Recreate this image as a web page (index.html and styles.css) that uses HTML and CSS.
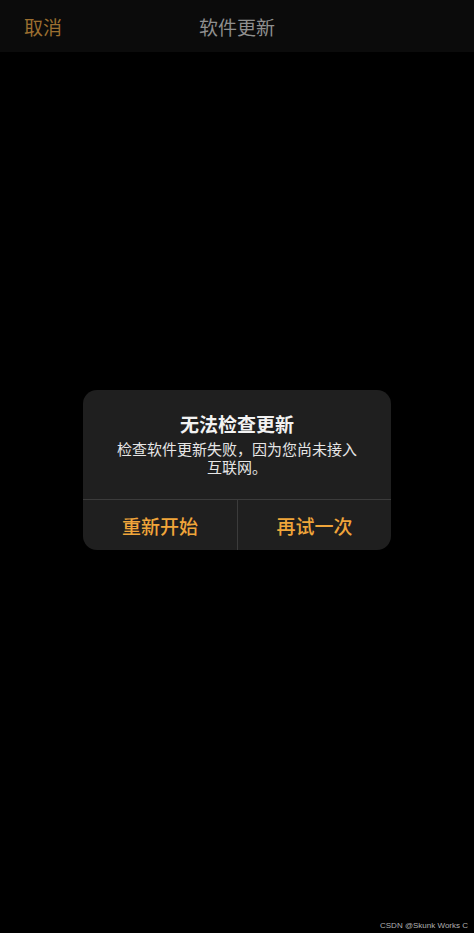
FILE: index.html
```html
<!DOCTYPE html>
<html lang="zh">
<head>
<meta charset="utf-8">
<link rel="stylesheet" href="styles.css">
</head>
<body>
<div class="screen">
  <header class="topbar">
    <span class="cancel">取消</span>
    <span class="title">软件更新</span>
  </header>
  <main class="stage">
    <div class="alert">
      <div class="alert-body">
        <div class="alert-title">无法检查更新</div>
        <div class="alert-msg">检查软件更新失败，因为您尚未接入<br>互联网。</div>
      </div>
      <div class="alert-actions">
        <div class="btn">重新开始</div>
        <div class="btn">再试一次</div>
      </div>
    </div>
  </main>
  <footer class="watermark">CSDN @Skunk Works C</footer>
</div>
</body>
</html>
```
FILE: styles.css
```css
html, body {
  margin: 0;
  padding: 0;
  background: #000;
}
body {
  font-family: "Noto Sans CJK SC", "Noto Sans", sans-serif;
}
.screen {
  width: 474px;
  height: 933px;
  display: flex;
  flex-direction: column;
  position: relative;
  overflow: hidden;
}
.topbar {
  height: 52px;
  background: #0b0b0b;
  position: relative;
  display: flex;
  align-items: center;
  justify-content: center;
  flex-shrink: 0;
}
.cancel {
  position: absolute;
  left: 24px;
  top: 14px;
  font-size: 19px;
  line-height: 26px;
  color: #9c6f30;
}
.title {
  font-size: 19px;
  line-height: 26px;
  color: #8f8f8f;
  margin-top: 1px;
}
.stage {
  flex: 1;
  display: flex;
  flex-direction: column;
  align-items: center;
  padding-top: 338px;
}
.alert {
  width: 308px;
  background: #1f1f1f;
  border-radius: 14px;
  overflow: hidden;
}
.alert-body {
  padding: 23px 16px 23px;
  text-align: center;
}
.alert-title {
  font-size: 19px;
  font-weight: bold;
  line-height: 22px;
  color: #f2f2f2;
}
.alert-msg {
  margin-top: 5px;
  font-size: 15px;
  line-height: 18px;
  color: #e6e6e6;
}
.alert-actions {
  display: grid;
  grid-template-columns: 1fr 1fr;
  border-top: 1px solid #3b3b3b;
  height: 50px;
}
.btn {
  display: flex;
  align-items: center;
  justify-content: center;
  font-size: 19px;
  font-weight: 500;
  color: #f0a53a;
}
.btn + .btn {
  border-left: 1px solid #3b3b3b;
}
.watermark {
  position: absolute;
  right: 6px;
  bottom: 3px;
  font-family: "Liberation Sans", Arial, sans-serif;
  font-size: 8px;
  color: #b0b0b0;
}
```
